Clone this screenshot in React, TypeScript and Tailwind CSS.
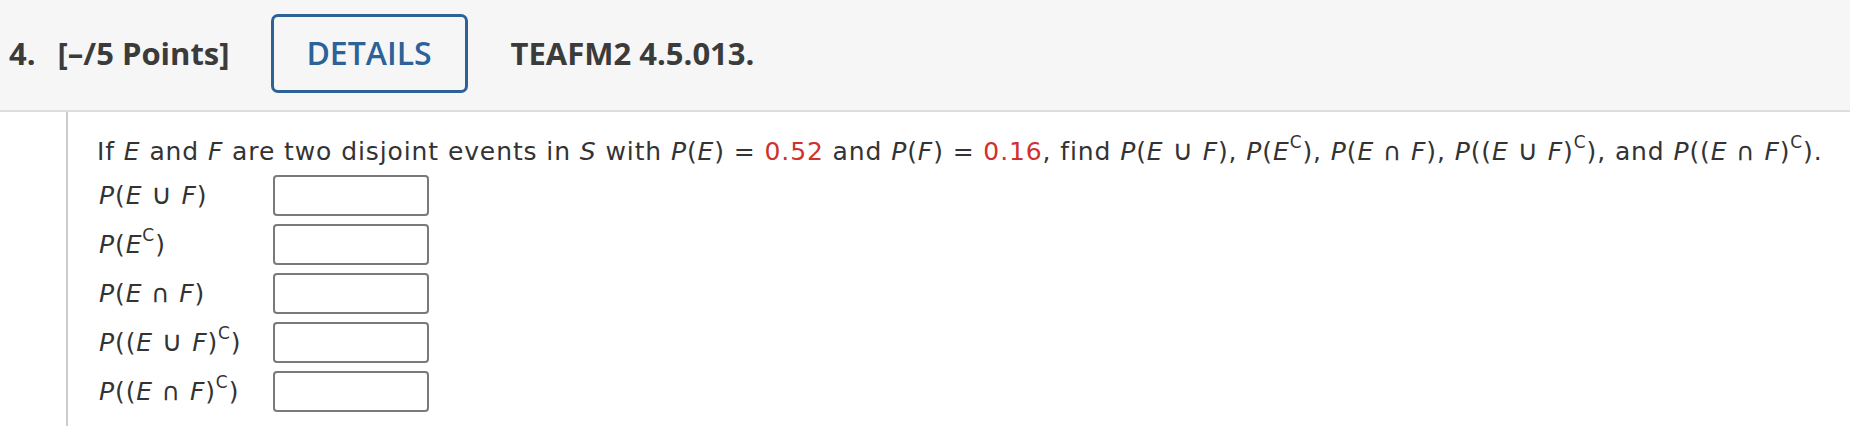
function Sup() {
  return <sup className="relative -top-[3px] align-super text-[17px] not-italic leading-none">C</sup>;
}

function Red({ children }: { children: React.ReactNode }) {
  return <span className="text-[#d0312d]">{children}</span>;
}

function Cup() {
  return <span className="text-[28px] leading-none">∪</span>;
}

const rows: React.ReactNode[] = [
  <>
    <i>P</i>(<i>E</i> <Cup /> <i>F</i>)
  </>,
  <>
    <i>P</i>(<i>E</i>
    <Sup />)
  </>,
  <>
    <i>P</i>(<i>E</i> ∩ <i>F</i>)
  </>,
  <>
    <i>P</i>((<i>E</i> <Cup /> <i>F</i>)
    <Sup />)
  </>,
  <>
    <i>P</i>((<i>E</i> ∩ <i>F</i>)
    <Sup />)
  </>,
];

export default function App() {
  return (
    <main className="min-h-[426px] w-[1850px] overflow-hidden bg-white text-[#333333]">
      <header className="flex h-[112px] items-center border-b-2 border-[#dddddd] bg-[#f6f6f6] pb-[4px] font-['Open_Sans',sans-serif] text-[31px] font-bold leading-none text-[#3b3b3b]">
        <span className="ml-[9px]">4.</span>
        <span className="ml-[22px]">[–/5 Points]</span>
        <button
          type="button"
          className="ml-[41px] flex h-[79px] w-[197px] items-center justify-center rounded-[7px] border-[3px] border-[#2c6298] bg-[#f6f6f6] text-[32px] font-semibold text-[#2c6298]"
        >
          DETAILS
        </button>
        <span className="ml-[43px]">TEAFM2 4.5.013.</span>
      </header>

      <section className="ml-[66px] min-h-[314px] border-l-2 border-[#cccccc] pl-[29px] pt-[23px] font-['DejaVu_Sans',sans-serif] text-[25px] leading-[33px] tracking-[0.9px]">
        <p className="whitespace-nowrap">
          If <i>E</i> and <i>F</i> are two disjoint events in <i>S</i> with <i>P</i>(<i>E</i>) = <Red>0.52</Red> and{" "}
          <i>P</i>(<i>F</i>) = <Red>0.16</Red>, find <i>P</i>(<i>E</i> <Cup /> <i>F</i>), <i>P</i>(<i>E</i>
          <Sup />
          ), <i>P</i>(<i>E</i> ∩ <i>F</i>), <i>P</i>((<i>E</i> <Cup /> <i>F</i>)
          <Sup />
          ), and <i>P</i>((<i>E</i> ∩ <i>F</i>)
          <Sup />
          ).
        </p>
        <div className="mt-[7px] flex flex-col gap-[8px]">
          {rows.map((label, i) => (
            <div key={i} className="flex h-[41px] items-center">
              <span className="w-[176px] whitespace-nowrap pl-[2px]">{label}</span>
              <input
                type="text"
                aria-label={`answer ${i + 1}`}
                className="h-[41px] w-[156px] rounded-[4px] border-2 border-[#7a7a7a] bg-white px-2 outline-none"
              />
            </div>
          ))}
        </div>
      </section>
    </main>
  );
}
